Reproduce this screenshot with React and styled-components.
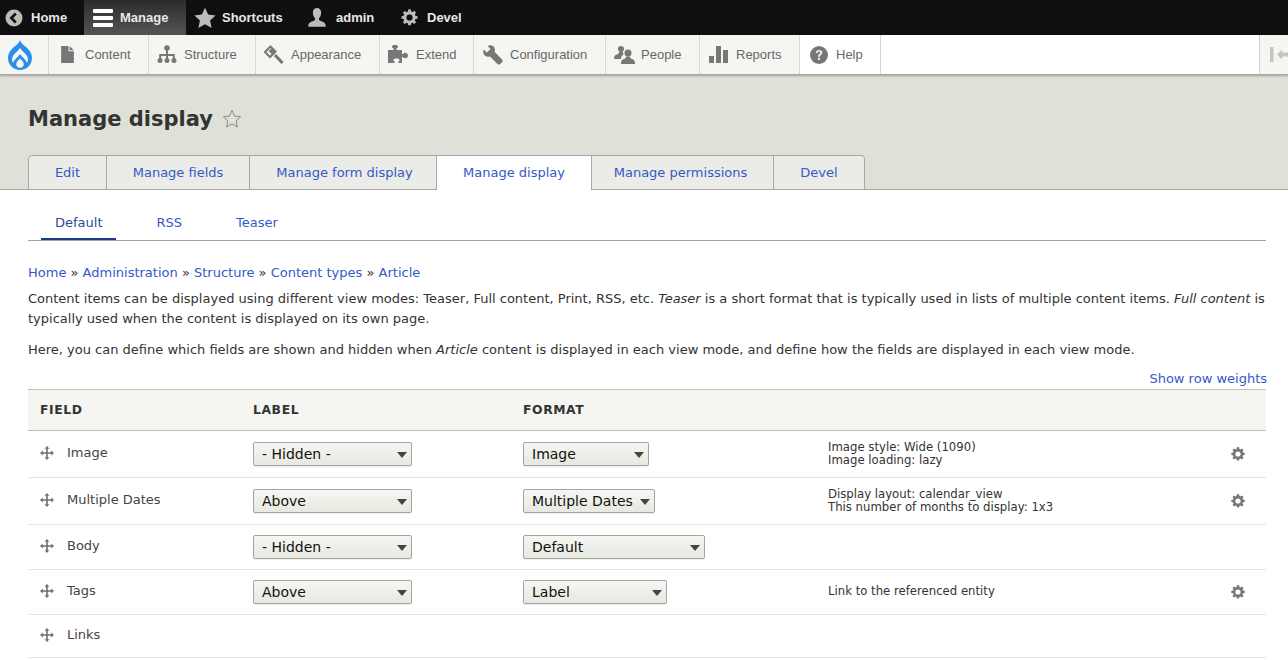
import React from "react";
import styled, { createGlobalStyle } from "styled-components";

const Global = createGlobalStyle`
html, body { margin: 0; padding: 0; background: #fff; }
body { font-family: "DejaVu Sans", sans-serif; font-size: 13px; color: #333; overflow: hidden; }
a { color: #3459c7; text-decoration: none; }
`;

const Page = styled.div`
  width: 1288px;
  height: 660px;
  overflow: hidden;
`;

/* black bar */
const TopBar = styled.div`
  display: flex;
  height: 35px;
  background: #0f0f0f;
  font-family: "Liberation Sans", sans-serif;
  font-weight: 700;
  font-size: 13px;
  color: #ddd;
`;

const TopItem = styled.a`
  display: flex;
  align-items: center;
  height: 35px;
  width: ${(p) => p.$w}px;
  padding-left: ${(p) => p.$pad}px;
  box-sizing: border-box;
  gap: ${(p) => p.$gap}px;
  color: #e8e8e8;
  background: ${(p) => (p.$active ? "linear-gradient(#2b2b2b, #555)" : "transparent")};
`;

/* tray */
const Tray = styled.div`
  display: flex;
  height: 39px;
  background: #fff;
  border-bottom: 1px solid #a9a9a4;
  box-shadow: 0 1px 2px rgba(0, 0, 0, 0.3);
  position: relative;
  font-family: "Liberation Sans", sans-serif;
  font-size: 13px;
`;

const LogoCell = styled.div`
  display: flex;
  align-items: center;
  padding: 1px 0 0 8px;
  background: #f5f5f2;
  border-right: 1px solid #d8d8d6;
  box-sizing: border-box;
  width: 49px;
`;

const TrayItem = styled.a`
  display: flex;
  align-items: center;
  box-sizing: border-box;
  width: ${(p) => p.$w}px;
  padding-left: ${(p) => p.$pad}px;
  gap: ${(p) => p.$gap}px;
  color: #676767;
  background: ${(p) => (p.$white ? "#fff" : "#f5f5f2")};
  border-right: 1px solid #d8d8d6;
`;

const TraySpace = styled.div`
  flex: 1;
`;

const TrayToggle = styled.div`
  width: 29px;
  display: flex;
  align-items: center;
  padding-left: 10px;
  box-sizing: border-box;
  background: #f5f5f2;
  border-left: 1px solid #cfcfcd;
`;

/* page header */
const Header = styled.div`
  height: 114px;
  background: #dfe1d8;
  border-bottom: 1px solid #a6a6a0;
  padding-left: 28px;
  display: flex;
  flex-direction: column;
`;

const TitleRow = styled.div`
  display: flex;
  flex: none;
  align-items: center;
  height: 80px;
  gap: 9px;
  padding-top: 8px;
  box-sizing: border-box;
`;

const Title = styled.h1`
  margin: 0;
  font-size: 21px;
  font-weight: 700;
  color: #333;
  line-height: 30px;
`;

const Tabs = styled.div`
  display: flex;
  flex: none;
`;

const Tab = styled.a`
  box-sizing: border-box;
  width: ${(p) => p.$w}px;
  height: 35px;
  display: flex;
  align-items: center;
  justify-content: center;
  padding: 0 ${(p) => p.$right || 0}px ${(p) => (p.$active ? 1 : 0)}px ${(p) => p.$left || 0}px;
  background: ${(p) => (p.$active ? "#fff" : "#ebece8")};
  border: 1px solid #a9a9a4;
  border-left-width: ${(p) => (p.$first ? 1 : 0)}px;
  border-bottom-width: ${(p) => (p.$active ? 0 : 1)}px;
  border-radius: ${(p) => (p.$first ? "4px 0 0 0" : p.$last ? "0 4px 0 0" : "0")};
  font-size: 13px;
`;

/* secondary tabs */
const SubTabs = styled.div`
  display: flex;
  gap: 26px;
  margin: 15px 22px 0 28px;
  height: 35px;
  border-bottom: 1px solid #a6a6a0;
  padding-left: 13px;
`;

const SubTab = styled.a`
  box-sizing: border-box;
  height: 35px;
  padding: 0 ${(p) => p.$right || 14}px 0 ${(p) => p.$left || 14}px;
  line-height: 35px;
  color: ${(p) => (p.$active ? "#2a4a9a" : "#3459c7")};
  border-bottom: ${(p) => (p.$active ? "2px solid #1b3a87" : "0")};
`;

const Content = styled.div`
  padding: 24px 22px 0 28px;
`;

const Crumbs = styled.div`
  line-height: 16px;
  height: 16px;
  color: #333;
`;

const Para = styled.p`
  margin: ${(p) => p.$top}px 0 0;
  line-height: 20px;
  font-size: 13px;
`;

const WeightsRow = styled.div`
  display: flex;
  justify-content: flex-end;
  height: 20px;
  margin-top: 9px;
  line-height: 20px;
  margin-right: -1px;
`;

const Table = styled.table`
  border-collapse: collapse;
  table-layout: fixed;
  width: 1238px;
`;

const Th = styled.th`
  height: 40px;
  padding: 0 12px;
  text-align: left;
  background: #f5f5f2;
  border-top: 1px solid #bfbfba;
  border-bottom: 1px solid #bfbfba;
  text-transform: uppercase;
  font-size: 12.35px;
  font-weight: 700;
  letter-spacing: 0.6px;
  color: #333;
`;

const Tr = styled.tr`
  height: ${(p) => p.$h}px;
  border-bottom: 1px solid #e6e4df;
`;

const Td = styled.td`
  padding: 0 12px;
  vertical-align: middle;
`;

const FieldCell = styled.div`
  display: flex;
  align-items: center;
  gap: 13px;
  font-size: 13px;
  color: #444;
  margin-top: -3px;
`;

const SelectWrap = styled.div`
  position: relative;
  width: ${(p) => p.$w}px;
  height: 24px;
  &::after {
    content: "";
    position: absolute;
    right: 5px;
    top: 10px;
    border-left: 5px solid transparent;
    border-right: 5px solid transparent;
    border-top: 6px solid #444;
    pointer-events: none;
  }
`;

const Select = styled.select`
  appearance: none;
  box-sizing: border-box;
  width: 100%;
  height: 24px;
  padding: 0 0 0 8px;
  font-family: "DejaVu Sans", sans-serif;
  font-size: 14px;
  color: #111;
  border: 1px solid #a6a6a0;
  border-radius: 2px;
  background: linear-gradient(#f6f6f3, #e7e8df);
  box-shadow: 0 1px 1px rgba(0, 0, 0, 0.08);
`;

const Summary = styled.div`
  font-size: 11.7px;
  line-height: 13px;
  color: #333;
  margin-top: -1px;
`;

const GearCell = styled(Td)`
  padding-left: 24px;
  padding-right: 0;
  line-height: 0;
`;

const Glyph = styled.svg`
  display: block;
  flex: none;
`;

const ic = (d, fill, size = 20, vb = 16) => (
  <Glyph width={size} height={size} viewBox={`0 0 ${vb} ${vb}`} fill={fill}>
    <path d={d} />
  </Glyph>
);

const gearPath = "M8 1l1.1.2.3 1.7 1.1.5 1.5-1 1.5 1.5-1 1.5.5 1.1 1.7.3v2.2l-1.7.3-.5 1.1 1 1.5-1.5 1.5-1.5-1-1.1.5-.3 1.7H6.9l-.3-1.7-1.1-.5-1.5 1-1.5-1.5 1-1.5-.5-1.1-1.7-.3V6.900l1.7-.3.5-1.100-1-1.500 1.500-1.500 1.500 1 1.100-.5.3-1.700zM8 5.400a2.600 2.600 0 100 5.200 2.600 2.600 0 000-5.200z";
const gray = "#777";

const BackIcon = () => (
  <Glyph width={18} height={18} viewBox="0 0 18 18">
    <circle cx="9" cy="9" r="8.5" fill="#bbb" />
    <path d="M10.800 4.500L6.300 9l4.500 4.500" fill="none" stroke="#111" strokeWidth="2.600" />
  </Glyph>
);

const BurgerIcon = () => (
  <Glyph width={20} height={20} viewBox="0 0 20 20" fill="#fff">
    <rect x="0" y="1" width="20" height="4" rx="1" />
    <rect x="0" y="8" width="20" height="4" rx="1" />
    <rect x="0" y="15" width="20" height="4" rx="1" />
  </Glyph>
);

const DropIcon = () => (
  <Glyph width={24} height={30} viewBox="0 0 24 30">
    <path fill="#2a8fe8" d="M12 0c.8 2.800 3.300 4.800 5.600 6.800C21 9.700 24 13 24 18c0 6.800-5.300 12-12 12S0 24.800 0 18C0 13 3 9.700 6.400 6.800 8.700 4.800 11.200 2.800 12 0z" />
    <path fill="#f5f5f2" d="M12 8c1.400 2.200 3.400 3.700 5 5.400 1.700 1.800 3 3.600 3 5.900 0 1.400-.4 2.700-1.100 3.800-.7-2.600-2.700-4.600-4.400-6.200-1-.9-2-1.800-2.500-2.900-.5 1.100-1.500 2-2.500 2.900-1.700 1.600-3.700 3.600-4.400 6.200-.7-1.100-1.100-2.400-1.100-3.800 0-2.300 1.300-4.100 3-5.900C8.600 11.700 10.600 10.200 12 8z" />
    <path fill="#f5f5f2" d="M12 18.500c1.400 1.800 3.800 3.300 3.800 5.700 0 2-1.700 3.500-3.800 3.500s-3.800-1.500-3.800-3.500c0-2.400 2.400-3.900 3.800-5.700z" />
  </Glyph>
);

const PeopleIcon = () => (
  <Glyph width={21} height={20} viewBox="0 0 21 20" fill={gray}>
    <circle cx="7" cy="4" r="3" />
    <path d="M5 7h4l.5 2.500c-2 1-2.500 3-2.500 4.500H0c0-3 1-4 3-4.500C4.500 9 5 8 5 7z" />
    <circle cx="14" cy="8" r="3.500" />
    <path d="M12 11.500h4c0 1.500.8 2.300 2.500 2.800 1.700.5 2.500 1.500 2.500 4.700H7c0-3.200.8-4.200 2.500-4.700 1.700-.5 2.500-1.300 2.500-2.800z" />
  </Glyph>
);

const ReportsIcon = () => (
  <Glyph width={20} height={19} viewBox="0 0 20 19" fill={gray}>
    <rect x="0" y="11" width="5" height="7" />
    <rect x="7" y="1" width="5" height="17" />
    <rect x="14" y="5" width="5" height="13" />
  </Glyph>
);

const HelpIcon = () => (
  <Glyph width={18} height={18} viewBox="0 0 18 18">
    <circle cx="9" cy="9" r="9" fill={gray} />
    <path d="M5.800 7c0-2 1.400-3.100 3.300-3.100 1.900 0 3.200 1.100 3.200 2.700 0 2.300-2.400 2.300-2.400 4.100H8c0-2.800 2.200-2.600 2.200-4 0-.6-.5-1.100-1.200-1.100-.8 0-1.200.5-1.300 1.400z" fill="#f5f5f2" />
    <rect x="8" y="11.700" width="2" height="2.200" fill="#f5f5f2" />
  </Glyph>
);

const StructureIcon = () => (
  <Glyph width={20} height={19} viewBox="0 0 20 19" fill={gray}>
    <circle cx="10" cy="3" r="2.800" />
    <circle cx="3" cy="15.500" r="2.500" />
    <circle cx="10" cy="15.500" r="2.500" />
    <circle cx="17" cy="15.500" r="2.500" />
    <path d="M9 3h2v6h6.800v6h-2v-4H11v4H9v-4H4.200v4h-2V9H9z" />
  </Glyph>
);

const AppearanceIcon = () => (
  <Glyph width={20} height={20} viewBox="0 0 20 20" fill="none">
    <path d="M6.500 1.500L1 7l5 5 5.500-5.500z" fill="none" stroke={gray} strokeWidth="2" />
    <path d="M4.500 6L9 10.500l3-3L8 3z" fill={gray} />
    <path d="M11 10l7.500 8" stroke={gray} strokeWidth="3" />
  </Glyph>
);

const ExtendIcon = () => (
  <Glyph width={20} height={19} viewBox="0 0 20 19" fill={gray}>
    <path d="M0 5h5.500V3.500C4.500 3 4 2.500 4 1.500 4 .5 5 0 7 0s3 .5 3 1.500c0 1-.5 1.500-1.500 2V5H14v4h1c.7-1 1.200-1.300 2-1.300 1.500 0 3 .8 3 2.800s-1.500 2.800-3 2.800c-.8 0-1.300-.3-2-1.300h-1v6h-3.700v-1.200c1-.6 1.200-1.200 1.200-1.800 0-1-1.200-1.500-3-1.500s-3 .5-3 1.500c0 .6.300 1.200 1.200 1.800V18H0z" />
  </Glyph>
);

const WrenchIcon = () => (
  <Glyph width={20} height={20} viewBox="0 0 20 20" fill={gray}>
    <path d="M4.500.8C7-.3 9.500.2 11 2c1 1.500 1.100 3.300.6 4.800L19 14.500c.8.8.8 2 0 2.800l-1.700 1.700c-.8.8-2 .8-2.800 0L7 11.600c-1.700.5-3.500.3-5-.8C.3 9.300-.2 7 .5 4.500l3.300 3.100 3.700-3.600z" />
  </Glyph>
);

const CollapseIcon = () => (
  <Glyph width={19} height={16} viewBox="0 0 19 16" fill="#c4c4c4">
    <rect x="0" y="0" width="3.500" height="15" />
    <path d="M7 7.500L12 2.500V5.500H19V9.500H12V12.500z" />
  </Glyph>
);

const MoveIcon = () => (
  <Glyph width={14} height={14} viewBox="0 0 14 14" fill="#6f6f6f">
    <path d="M7 0l2.400 2.800H7.800v3.400h3.400V4.600L14 7l-2.800 2.400V7.800H7.800v3.400h1.600L7 14l-2.400-2.800h1.600V7.800H2.800v1.600L0 7l2.800-2.400v1.600h3.400V2.800H4.600z" />
  </Glyph>
);

const Gear = ({ size = 16, fill = "#777" }) => (
  <Glyph width={size} height={size} viewBox="0 0 16 16" fill={fill}>
    <path fillRule="evenodd" d={gearPath} />
  </Glyph>
);

const rows = [
  { name: "Image", label: "- Hidden -", format: "Image", fw: 126, h: 47, summary: ["Image style: Wide (1090)", "Image loading: lazy"], gear: true },
  { name: "Multiple Dates", label: "Above", format: "Multiple Dates", fw: 132, h: 47, summary: ["Display layout: calendar_view", "This number of months to display: 1x3"], gear: true },
  { name: "Body", label: "- Hidden -", format: "Default", fw: 182, h: 45, summary: [], gear: false },
  { name: "Tags", label: "Above", format: "Label", fw: 144, h: 45, summary: ["Link to the referenced entity"], gear: true },
  { name: "Links", h: 43, summary: [], gear: false },
];

const Dropdown = ({ value, w }) => (
  <SelectWrap $w={w}>
    <Select defaultValue={value}>
      <option>{value}</option>
    </Select>
  </SelectWrap>
);

export default function App() {
  return (
    <Page>
      <Global />
      <TopBar>
        <TopItem href="#" $w={84} $pad={5} $gap={8}><BackIcon />Home</TopItem>
        <TopItem href="#" $w={102} $pad={9} $gap={7} $active><BurgerIcon />Manage</TopItem>
        <TopItem href="#" $w={107} $pad={8} $gap={6}>{ic("M8 .5l2.300 5 5.400.6-4 3.700 1.100 5.400L8 12.500l-4.800 2.700 1.100-5.400-4-3.700 5.400-.6z", "#bbb", 22)}Shortcuts</TopItem>
        <TopItem href="#" $w={107} $pad={14} $gap={9}>{ic("M8 0c2 0 3.300 1.500 3.300 3.800 0 2-.8 3.500-1.800 4.500 0 1.200.5 1.700 2 2.300 2 .7 3.500 1.300 3.500 4.400H1c0-3.100 1.500-3.700 3.500-4.400 1.500-.6 2-1.100 2-2.300-1-1-1.800-2.500-1.800-4.500C4.700 1.500 6 0 8 0z", "#bbb", 20)}admin</TopItem>
        <TopItem href="#" $w={100} $pad={0} $gap={8}><Gear size={19} fill="#bbb" />Devel</TopItem>
      </TopBar>
      <Tray>
        <LogoCell><DropIcon /></LogoCell>
        <TrayItem href="#" $w={100} $pad={10} $gap={9}>{ic("M2 0h7v5h5v13H2zM10 0l4 4h-4z", gray, 17, 16)}Content</TrayItem>
        <TrayItem href="#" $w={107} $pad={8} $gap={7}><StructureIcon />Structure</TrayItem>
        <TrayItem href="#" $w={124} $pad={8} $gap={7}><AppearanceIcon />Appearance</TrayItem>
        <TrayItem href="#" $w={94} $pad={8} $gap={8}><ExtendIcon />Extend</TrayItem>
        <TrayItem href="#" $w={132} $pad={9} $gap={7}><WrenchIcon />Configuration</TrayItem>
        <TrayItem href="#" $w={94} $pad={8} $gap={6}><PeopleIcon />People</TrayItem>
        <TrayItem href="#" $w={100} $pad={9} $gap={7}><ReportsIcon />Reports</TrayItem>
        <TrayItem href="#" $w={81} $pad={10} $gap={8} $white><HelpIcon />Help</TrayItem>
        <TraySpace />
        <TrayToggle><CollapseIcon /></TrayToggle>
      </Tray>
      <Header>
        <TitleRow>
          <Title>Manage display</Title>
          <Glyph width={20} height={20} viewBox="0 0 20 20">
            <path d="M10 1.500l2.600 5.600 6 .7-4.400 4.200 1.100 6L10 15l-5.300 3 1.100-6L1.400 7.800l6-.7z" fill="none" stroke="#8b8b78" strokeWidth="1" />
          </Glyph>
        </TitleRow>
        <Tabs>
          <Tab href="#" $w={79} $first>Edit</Tab>
          <Tab href="#" $w={143}>Manage fields</Tab>
          <Tab href="#" $w={187} $left={3}>Manage form display</Tab>
          <Tab href="#" $w={155} $active>Manage display</Tab>
          <Tab href="#" $w={182} $right={4}>Manage permissions</Tab>
          <Tab href="#" $w={91} $last>Devel</Tab>
        </Tabs>
      </Header>
      <SubTabs>
        <SubTab href="#" $active $right={13}>Default</SubTab>
        <SubTab href="#" $left={15}>RSS</SubTab>
        <SubTab href="#">Teaser</SubTab>
      </SubTabs>
      <Content>
        <Crumbs>
          <a href="#">Home</a> » <a href="#">Administration</a> » <a href="#">Structure</a> » <a href="#">Content types</a> » <a href="#">Article</a>
        </Crumbs>
        <Para $top={8}>
          Content items can be displayed using different view modes: Teaser, Full content, Print, RSS, etc. <em>Teaser</em> is a short format that is typically used in lists of multiple content items. <em>Full content</em> is typically used when the content is displayed on its own page.
        </Para>
        <Para $top={11}>
          Here, you can define which fields are shown and hidden when <em>Article</em> content is displayed in each view mode, and define how the fields are displayed in each view mode.
        </Para>
        <WeightsRow><a href="#">Show row weights</a></WeightsRow>
        <Table>
          <colgroup>
            <col style={{ width: 213 }} />
            <col style={{ width: 270 }} />
            <col style={{ width: 305 }} />
            <col style={{ width: 390 }} />
            <col style={{ width: 60 }} />
          </colgroup>
          <thead>
            <tr>
              <Th>Field</Th>
              <Th>Label</Th>
              <Th>Format</Th>
              <Th />
              <Th />
            </tr>
          </thead>
          <tbody>
            {rows.map((r) => (
              <Tr key={r.name} $h={r.h}>
                <Td><FieldCell><MoveIcon />{r.name}</FieldCell></Td>
                <Td>{r.label && <Dropdown value={r.label} w={159} />}</Td>
                <Td>{r.format && <Dropdown value={r.format} w={r.fw} />}</Td>
                <Td>
                  <Summary>{r.summary.map((s) => <div key={s}>{s}</div>)}</Summary>
                </Td>
                <GearCell>{r.gear && <Gear />}</GearCell>
              </Tr>
            ))}
          </tbody>
        </Table>
      </Content>
    </Page>
  );
}
